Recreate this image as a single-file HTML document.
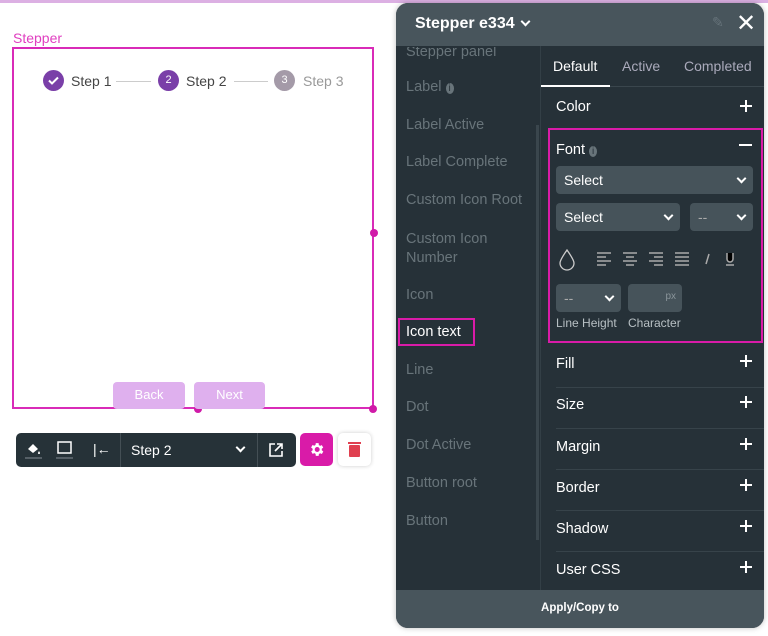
<!DOCTYPE html>
<html><head><meta charset="utf-8"><style>
*{box-sizing:border-box;margin:0;padding:0}
body{width:768px;height:636px;background:#fff;position:relative;overflow:hidden;font-family:"Liberation Sans",sans-serif}
.a{position:absolute}
.topline{left:0;top:0;width:768px;height:3px;background:#dcb0e3}
.lbl{left:13px;top:30px;color:#e040c0;font-size:14px}
.frame{left:12px;top:47px;width:362px;height:362px;border:2px solid #d92bb8}
.dot{width:8px;height:8px;border-radius:50%;background:#d01aa8}
.circ{width:21px;height:21px;border-radius:50%;color:#fff;font-size:11px;text-align:center;line-height:21px}
.st{font-size:14px;color:#444}
.ln{height:1px;background:#ccc}
.btn{background:#dfb0ee;color:#fff;font-size:13px;text-align:center;line-height:26px;border-radius:4px;height:27px}
.tb{left:16px;top:433px;width:280px;height:34px;background:#263238;border-radius:5px;color:#fff}
.panel{left:396px;top:3px;width:368px;height:625px;background:#263138;border-radius:12px;overflow:hidden;box-shadow:0 0 6px rgba(0,0,0,.25)}
.hd{left:0;top:0;width:368px;height:43px;background:#48555c}
.li{left:10px;color:#68747a;font-size:14.5px}
.rw{left:160px;color:#fff;font-size:14.5px}
.pl{right:12px;width:12px;height:12px}
.pl:before{content:"";position:absolute;left:0;top:5px;width:12px;height:2px;background:#fff}
.pl:after{content:"";position:absolute;left:5px;top:0;width:2px;height:12px;background:#fff}
.sep{left:160px;width:208px;height:1px;background:#37434a}
.fld{background:#46535a;border-radius:4px;color:#fff;font-size:14px;padding-left:8px;line-height:28px;height:28px}
.chev{position:absolute;right:8px;top:9px;width:7px;height:7px;border-right:2px solid #fff;border-bottom:2px solid #fff;transform:rotate(45deg)}
</style></head><body>
<div class="a topline"></div>
<div class="a lbl">Stepper</div>
<div class="a frame"></div>
<div class="a dot" style="left:370px;top:229px"></div>
<div class="a dot" style="left:194px;top:405px"></div>
<div class="a dot" style="left:369px;top:405px"></div>
<div class="a circ" style="left:43px;top:70px;background:#7a3fa8"><svg width="21" height="21" viewBox="0 0 21 21"><path d="M6 10.5l3 3 6-6" stroke="#fff" stroke-width="2" fill="none"/></svg></div>
<div class="a st" style="left:71px;top:73px">Step 1</div>
<div class="a ln" style="left:116px;top:81px;width:35px"></div>
<div class="a circ" style="left:158px;top:70px;background:#7a3fa8">2</div>
<div class="a st" style="left:186px;top:73px">Step 2</div>
<div class="a ln" style="left:234px;top:81px;width:34px"></div>
<div class="a circ" style="left:274px;top:70px;background:#a49aa8">3</div>
<div class="a st" style="left:303px;top:73px;color:#999">Step 3</div>
<div class="a btn" style="left:113px;top:382px;width:72px">Back</div>
<div class="a btn" style="left:194px;top:382px;width:71px">Next</div>

<div class="a tb">
<svg class="a" style="left:9px;top:7px" width="18" height="20" viewBox="0 0 18 20"><path d="M3 9l5-5 5 5-5 4z" fill="#fff"/><path d="M14 11q2 3 0 3q-2 0 0-3" fill="#fff"/><rect x="0" y="17" width="17" height="2" fill="#555f66"/></svg>
<svg class="a" style="left:40px;top:7px" width="18" height="20" viewBox="0 0 18 20"><rect x="2" y="2" width="13" height="11" stroke="#fff" stroke-width="1.5" fill="none"/><rect x="0" y="17" width="17" height="2" fill="#555f66"/></svg>
<div class="a" style="left:77px;top:8px;font-size:14px">|←</div>
<div class="a" style="left:104px;top:0;width:1px;height:34px;background:#444f55"></div>
<div class="a" style="left:115px;top:9px;font-size:14px">Step 2</div>
<div class="chev" style="right:52px;top:11px"></div>
<div class="a" style="left:241px;top:0;width:1px;height:34px;background:#444f55"></div>
<svg class="a" style="left:252px;top:9px" width="16" height="16" viewBox="0 0 16 16"><path d="M7 2H2v12h12V9M9 2h5v5M14 2L7 9" stroke="#fff" stroke-width="1.6" fill="none"/></svg>
</div>
<div class="a" style="left:300px;top:433px;width:33px;height:33px;background:#d91ba8;border-radius:5px"><svg style="position:absolute;left:8px;top:8px" width="17" height="17" viewBox="0 0 24 24"><path fill="#fff" d="M19.4 13a7.5 7.5 0 000-2l2.1-1.6-2-3.5-2.5 1a7 7 0 00-1.7-1L15 3h-4l-.4 2.7a7 7 0 00-1.7 1l-2.5-1-2 3.5L6.6 11a7.5 7.5 0 000 2l-2.1 1.6 2 3.5 2.5-1a7 7 0 001.7 1L11 21h4l.4-2.7a7 7 0 001.7-1l2.5 1 2-3.5zM13 15.5a3.5 3.5 0 110-7 3.5 3.5 0 010 7z"/></svg></div>
<div class="a" style="left:338px;top:433px;width:33px;height:33px;background:#fff;border-radius:5px;box-shadow:0 0 4px rgba(0,0,0,.2)"><svg style="position:absolute;left:10px;top:8px" width="13" height="17" viewBox="0 0 13 17"><rect x="0" y="1" width="13" height="2" fill="#e04050"/><rect x="1" y="4" width="11" height="12" rx="1" fill="#e04050"/></svg></div>

<div class="a panel">
<div class="a hd"></div>
<div class="a" style="left:19px;top:12px;color:#fff;font-size:16px;font-weight:bold">Stepper e334</div>
<div class="a" style="left:126px;top:15px;width:7px;height:7px;border-right:2px solid #fff;border-bottom:2px solid #fff;transform:rotate(45deg)"></div>
<div class="a" style="left:316px;top:11px;color:#66737a;font-size:14px">✎</div>
<div class="a" style="left:340px;top:6px;color:#fff;font-size:24px">✕</div>
<div class="a li" style="top:41px;clip-path:inset(3px 0 0 0)">Stepper panel</div>
<div class="a li" style="top:76px">Label <span style="font-size:10px;background:#68747a;color:#263138;border-radius:50%;padding:0 3px">i</span></div>
<div class="a li" style="top:114px">Label Active</div>
<div class="a li" style="top:151px">Label Complete</div>
<div class="a li" style="top:189px">Custom Icon Root</div>
<div class="a li" style="top:227px;line-height:19px">Custom Icon<br>Number</div>
<div class="a li" style="top:284px">Icon</div>
<div class="a" style="left:2px;top:315px;width:77px;height:28px;border:2px solid #d91ba8"></div>
<div class="a li" style="top:321px;color:#fff">Icon text</div>
<div class="a li" style="top:359px">Line</div>
<div class="a li" style="top:396px">Dot</div>
<div class="a li" style="top:434px">Dot Active</div>
<div class="a li" style="top:472px">Button root</div>
<div class="a li" style="top:510px">Button</div>
<div class="a" style="left:140px;top:122px;width:3px;height:415px;background:#3a464d"></div>
<div class="a" style="left:144px;top:43px;width:1px;height:547px;background:#333f46"></div>
<div class="a" style="left:157px;top:55px;color:#fff;font-size:14px">Default</div>
<div class="a" style="left:226px;top:55px;color:#aab;font-size:14px">Active</div>
<div class="a" style="left:288px;top:55px;color:#aab;font-size:14px">Completed</div>
<div class="a" style="left:145px;top:83px;width:223px;height:1px;background:#3a464d"></div>
<div class="a" style="left:145px;top:82px;width:69px;height:2px;background:#fff"></div>
<div class="a rw" style="top:96px">Color</div><div class="a pl" style="top:97px"></div>
<div class="a" style="left:152px;top:125px;width:215px;height:215px;border:2px solid #d91ba8"></div>
<div class="a rw" style="top:139px">Font <span style="font-size:10px;background:#68747a;color:#263138;border-radius:50%;padding:0 3px">i</span></div>
<div class="a" style="right:12px;top:141px;width:13px;height:2px;background:#fff"></div>
<div class="a fld" style="left:160px;top:163px;width:197px">Select<div class="chev"></div></div>
<div class="a fld" style="left:160px;top:200px;width:124px">Select<div class="chev"></div></div>
<div class="a fld" style="left:294px;top:200px;width:63px;color:#aaa">--<div class="chev"></div></div>
<svg class="a" style="left:162px;top:245px" width="18" height="24" viewBox="0 0 18 24"><path d="M9 2Q2 12 2 15a7 7 0 0014 0Q16 12 9 2z" stroke="#ccc" stroke-width="1.3" fill="none"/></svg>
<svg class="a" style="left:200px;top:249px" width="150" height="14" viewBox="0 0 150 14"><g stroke="#aaa" stroke-width="1.5"><path d="M1 1h14M1 5h9M1 9h14M1 13h9"/><path d="M27 1h14M30 5h8M27 9h14M30 13h8"/><path d="M53 1h14M58 5h9M53 9h14M58 13h9"/><path d="M79 1h14M79 5h14M79 9h14M79 13h14"/><path d="M110 12l3-10"/><path d="M131 1v6a3 3 0 006 0v-6M130 13h8"/></g></svg>
<div class="a fld" style="left:160px;top:281px;width:65px;color:#aaa">--<div class="chev"></div></div>
<div class="a fld" style="left:232px;top:281px;width:54px;color:#8a959a;font-size:10px;text-align:right;padding-right:6px;line-height:26px">px</div>
<div class="a" style="left:160px;top:313px;color:#b8c0c4;font-size:12px">Line Height</div>
<div class="a" style="left:232px;top:313px;color:#b8c0c4;font-size:12px">Character</div>
<div class="a rw" style="top:353px">Fill</div><div class="a pl" style="top:352px"></div>
<div class="a sep" style="top:384px"></div>
<div class="a rw" style="top:394px">Size</div><div class="a pl" style="top:393px"></div>
<div class="a sep" style="top:425px"></div>
<div class="a rw" style="top:436px">Margin</div><div class="a pl" style="top:435px"></div>
<div class="a sep" style="top:466px"></div>
<div class="a rw" style="top:477px">Border</div><div class="a pl" style="top:476px"></div>
<div class="a sep" style="top:507px"></div>
<div class="a rw" style="top:518px">Shadow</div><div class="a pl" style="top:517px"></div>
<div class="a sep" style="top:548px"></div>
<div class="a rw" style="top:559px">User CSS</div><div class="a pl" style="top:558px"></div>
<div class="a" style="left:0;top:587px;width:368px;height:38px;background:#48555c;color:#fff;font-size:11.5px;font-weight:bold;text-align:center;line-height:36px">Apply/Copy to</div>
</div>
</body></html>
